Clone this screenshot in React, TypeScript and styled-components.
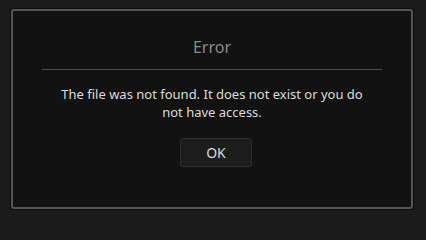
import React from "react";
import styled, { createGlobalStyle } from "styled-components";

const GlobalStyle = createGlobalStyle`
  html, body {
    margin: 0;
    padding: 0;
    background: #1b1b1b;
  }
  body {
    font-family: "Noto Sans", "Open Sans", "DejaVu Sans", sans-serif;
  }
`;

const Page = styled.div`
  box-sizing: border-box;
  width: 426px;
  height: 219px;
  padding: 9px 13px 10px 11px;
`;

const Dialog = styled.div`
  box-sizing: border-box;
  height: 200px;
  background: #121212;
  border: 2px solid #555555;
  border-radius: 3px;
  box-shadow: 0 0 0 1px #0e0e0e;
  padding: 26px 29px 0;
  display: flex;
  flex-direction: column;
  align-items: center;
`;

const Title = styled.h1`
  margin: 0;
  font-size: 16px;
  line-height: 20px;
  font-weight: 400;
  color: #8c8c8c;
`;

const Divider = styled.hr`
  align-self: stretch;
  margin: 12px 0 0;
  border: 0;
  height: 1px;
  background: #4e4e4e;
`;

const Message = styled.p`
  margin: 15px 0 0;
  font-size: 13px;
  line-height: 18px;
  color: #dcdcdc;
  text-align: center;
  max-width: 320px;
`;

const Button = styled.button`
  margin: 17px 0 0 8px;
  width: 72px;
  height: 29px;
  background: #1d1d1d;
  border: 1px solid #2e2e2e;
  border-radius: 3px;
  color: #d8d8d8;
  font-family: inherit;
  font-size: 14px;
  cursor: pointer;
`;

export default function App() {
  return (
    <>
      <GlobalStyle />
      <Page>
        <Dialog>
          <Title>Error</Title>
          <Divider />
          <Message>
            The file was not found. It does not exist or you do not have access.
          </Message>
          <Button>OK</Button>
        </Dialog>
      </Page>
    </>
  );
}
